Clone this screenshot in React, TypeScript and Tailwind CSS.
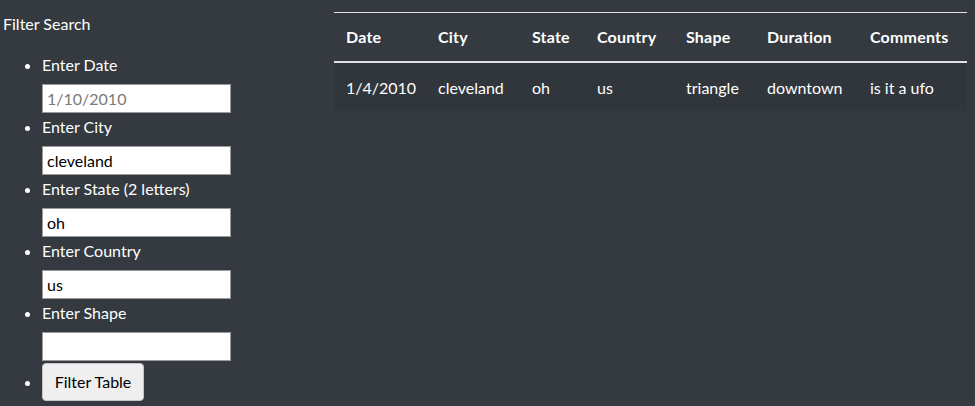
const fields = [
  { label: 'Enter Date', value: '', placeholder: '1/10/2010' },
  { label: 'Enter City', value: 'cleveland', placeholder: '' },
  { label: 'Enter State (2 letters)', value: 'oh', placeholder: '' },
  { label: 'Enter Country', value: 'us', placeholder: '' },
  { label: 'Enter Shape', value: '', placeholder: '' },
];

const columns = [
  { name: 'Date', width: 'w-[92px]' },
  { name: 'City', width: 'w-[94px]' },
  { name: 'State', width: 'w-[65px]' },
  { name: 'Country', width: 'w-[89px]' },
  { name: 'Shape', width: 'w-[81px]' },
  { name: 'Duration', width: 'w-[103px]' },
  { name: 'Comments', width: 'w-[109px]' },
];

const rows = [['1/4/2010', 'cleveland', 'oh', 'us', 'triangle', 'downtown', 'is it a ufo']];

export default function App() {
  return (
    <div className="w-[975px] h-[406px] overflow-hidden bg-[#343a40] text-white font-['Lato','Liberation_Sans',sans-serif] text-[16px] leading-[24px] flex">
      {/* Filters */}
      <aside className="w-[334px] shrink-0 pl-[3px] pt-[12px]">
        <div className="text-[16px]">Filter Search</div>
        <ul className="list-disc pl-[42px] mt-[17px] marker:text-white">
          {fields.map((f) => (
            <li key={f.label} className="-ml-[3px] pl-0">
              <label className="block">{f.label}</label>
              <input
                type="text"
                defaultValue={f.value}
                placeholder={f.placeholder}
                className="block w-[189px] h-[29px] mt-[7px] mb-[2px] bg-white text-black border border-[#9a9a9a] px-[4px] text-[16px] placeholder:text-[#7a7a7a] outline-none"
              />
            </li>
          ))}
          <li className="-ml-[3px]">
            <button className="h-[38px] w-[102px] bg-[#efefef] text-black border border-[#c6c6c6] rounded-[4px] text-[16px]">
              Filter Table
            </button>
          </li>
        </ul>
      </aside>

      {/* Results table */}
      <main className="flex-1 pt-[12px] pr-[8px]">
        <table className="w-[633px] table-fixed border-collapse">
          <thead>
            <tr className="border-t border-[#dee2e6]">
              {columns.map((c) => (
                <th key={c.name} className={`${c.width} text-left font-bold tracking-[0.2px] px-[12px] py-[12px] border-b-2 border-[#dee2e6]`}>
                  {c.name}
                </th>
              ))}
            </tr>
          </thead>
          <tbody>
            {rows.map((r, i) => (
              <tr key={i} className="bg-[#31363c]">
                {r.map((cell, j) => (
                  <td key={j} className="px-[12px] pt-[13px] pb-[11px]">
                    {cell}
                  </td>
                ))}
              </tr>
            ))}
          </tbody>
        </table>
      </main>
    </div>
  );
}
